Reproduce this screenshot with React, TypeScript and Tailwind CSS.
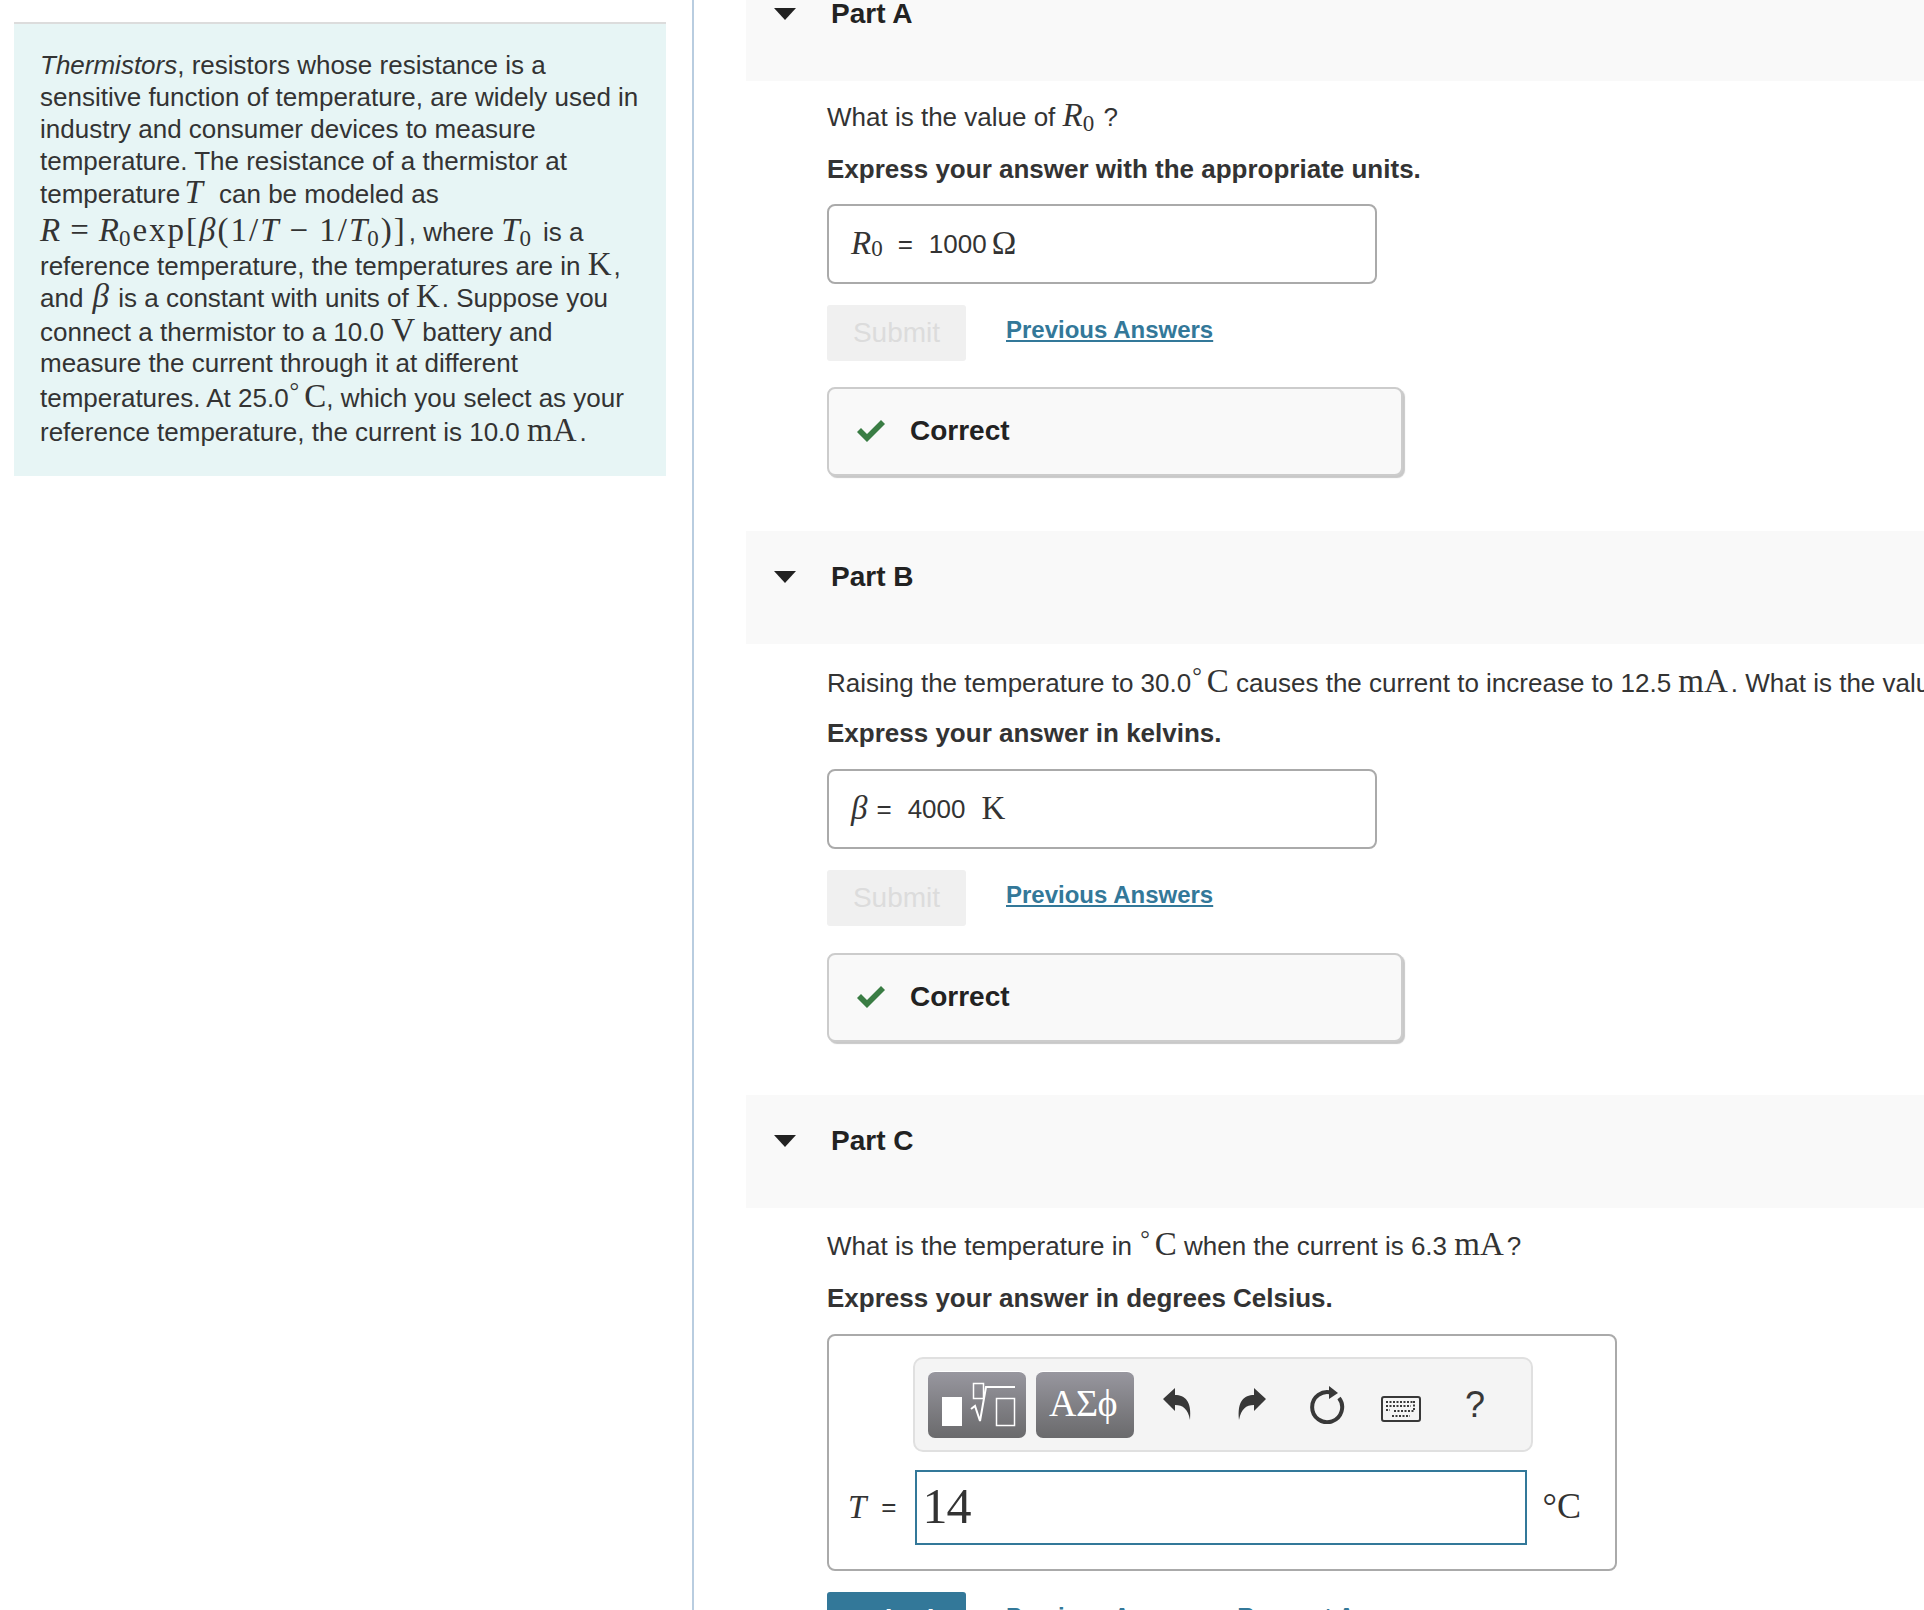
import React from 'react';

const SANS = "font-['Liberation_Sans',Arial,sans-serif]";

// Math bits, the original page renders these with MathJax
const Mi: React.FC<{ children: React.ReactNode; className?: string }> = ({ children, className = '' }) => (
  <span className={`font-['Liberation_Serif',serif] italic text-[33px] ${className}`}>{children}</span>
);

const Mn: React.FC<{ children: React.ReactNode; className?: string }> = ({ children, className = '' }) => (
  <span className={`font-['Liberation_Serif',serif] text-[33px] ${className}`}>{children}</span>
);

const Sub0: React.FC = () => (
  <span className="font-['Liberation_Serif',serif] text-[23px] relative top-[5px] -ml-[2px]">0</span>
);

const Deg: React.FC = () => (
  <span className="font-['Liberation_Serif',serif] text-[24px] relative -top-[8px] pl-[1px] pr-[5px]">°</span>
);

const PartHeader: React.FC<{ label: string }> = ({ label }) => (
  <div className="h-[113px] bg-[#f9f9f9] flex items-start">
    <svg width="22" height="12" viewBox="0 0 22 12" className="ml-[28px] mt-[40px] shrink-0">
      <path d="M0 0H22L11 12Z" fill="#222" />
    </svg>
    <div className="ml-[35px] mt-[29px] text-[28px] leading-[34px] font-bold text-[#222]">{label}</div>
  </div>
);

const AnswerBox: React.FC<{ children: React.ReactNode }> = ({ children }) => (
  <div className="w-[550px] h-[80px] border-2 border-[#aaa] rounded-[8px] flex items-center pl-[22px] bg-white">
    {children}
  </div>
);

const SubmitRow: React.FC<{ active?: boolean; links?: boolean }> = ({ active, links }) => (
  <div className="flex items-start">
    <div
      className={`w-[139px] h-[56px] rounded-[3px] flex items-center justify-center text-[28px] ${
        active ? 'bg-[#337899] text-white font-bold' : 'bg-[#f0f0f0] text-[#dcdcdc]'
      }`}
    >
      Submit
    </div>
    <a className="ml-[40px] mt-[9px] text-[24px] leading-[32px] font-bold text-[#337899] underline">Previous Answers</a>
    {links && (
      <a className="ml-[24px] mt-[9px] text-[24px] leading-[32px] font-bold text-[#337899] underline">Request Answer</a>
    )}
  </div>
);

const CorrectBox: React.FC = () => (
  <div className="w-[576px] h-[89px] border-2 border-[#ccc] rounded-[8px] bg-[#f9f9f9] shadow-[2px_2px_1px_#c8c8c8] flex items-center pl-[27px]">
    <svg width="30" height="24" viewBox="0 0 30 24" className="shrink-0 -mt-[2px]">
      <path d="M1 13L5 9L11 15L25 1L29 5L11 23Z" fill="#3a7d44" />
    </svg>
    <span className="ml-[24px] -mt-[1px] text-[28px] font-bold text-[#222]">Correct</span>
  </div>
);

const Toolbar: React.FC = () => (
  <div className="w-[620px] h-[95px] ml-[84px] border-2 border-[#e0e0e0] rounded-[10px] bg-[#f4f4f4] flex items-center pl-[13px]">
    <div className="w-[98px] h-[67px] rounded-[7px] bg-gradient-to-b from-[#98979f] to-[#6a6a6c] border-t border-white shrink-0">
      <svg width="98" height="67" viewBox="0 0 98 67">
        <rect x="14" y="25" width="20" height="29" fill="#fff" />
        <rect x="45.5" y="11.5" width="10" height="15" fill="none" stroke="#fff" strokeWidth="1.5" />
        <path d="M43 37L47 34L52 49L58 15H87" fill="none" stroke="#fff" strokeWidth="2" />
        <rect x="68.5" y="26.5" width="18" height="27" fill="none" stroke="#fff" strokeWidth="1.5" />
      </svg>
    </div>
    <div className="ml-[10px] w-[98px] h-[67px] rounded-[7px] bg-gradient-to-b from-[#98979f] to-[#6a6a6c] border-t border-white shrink-0 flex items-center justify-center pr-[4px] pb-[4px] font-['Liberation_Serif',serif] text-[38px] text-white -tracking-[0.5px]">
      ΑΣϕ
    </div>
    <svg width="32" height="36" viewBox="0 0 32 36" className="ml-[27px] shrink-0">
      <path d="M2 12L14 1V8C24 8 31 14 29 33C27 22 22 18 14 18V24Z" fill="#383838" />
    </svg>
    <svg width="32" height="36" viewBox="0 0 32 36" className="ml-[43px] shrink-0">
      <path d="M30 12L18 1V8C8 8 1 14 3 33C5 22 10 18 18 18V24Z" fill="#383838" />
    </svg>
    <svg width="36" height="38" viewBox="0 0 36 38" className="ml-[42px] shrink-0">
      <path d="M22 7A15 15 0 1 0 29 12" fill="none" stroke="#383838" strokeWidth="4" />
      <path d="M19 0L28 7L19 13Z" fill="#383838" />
    </svg>
    <svg width="40" height="26" viewBox="0 0 40 26" className="ml-[35px] mt-[8px] shrink-0">
      <rect x="1" y="1" width="38" height="24" rx="2" fill="none" stroke="#383838" strokeWidth="2" />
      <path d="M5 6H32M5 10H30M5 14H9M33 5V15H12M11 20H29" fill="none" stroke="#383838" strokeWidth="2" strokeDasharray="2 1.5" />
    </svg>
    <span className="ml-[44px] text-[36px] text-[#383838] font-['Liberation_Sans',sans-serif]">?</span>
  </div>
);

const App: React.FC = () => {
  return (
    <div className={`${SANS} w-[1924px] h-[1610px] overflow-hidden bg-white flex text-[26px] text-[#333]`}>
      {/* Left column: problem statement */}
      <div className="w-[694px] shrink-0 border-r-2 border-[#b9cde0] pl-[14px] pt-[22px]">
        <div className="w-[652px] h-[454px] bg-[#e7f5f5] border-t-2 border-[#dcdcdc] pl-[26px] pt-[25px] whitespace-nowrap">
          <div className="leading-[32px]"><i>Thermistors</i>, resistors whose resistance is a</div>
          <div className="leading-[32px]">sensitive function of temperature, are widely used in</div>
          <div className="leading-[32px]">industry and consumer devices to measure</div>
          <div className="h-[32px] leading-[32px]">temperature. The resistance of a thermistor at</div>
          <div className="h-[31px] leading-[31px]">temperature <Mi className="-ml-[3px] mr-[7px] tracking-[2px]">T</Mi> can be modeled as</div>
          <div className="mt-[4px] h-[37px] leading-[37px]">
            <span className="tracking-[2px]">
              <Mi>R</Mi><Mn className="mx-[8px]">=</Mn><Mi>R</Mi><Sub0 /><Mn>exp[</Mn><Mi>β</Mi><Mn>(1/</Mn><Mi>T</Mi><Mn className="mx-[9px]">−</Mn><Mn>1/</Mn><Mi>T</Mi><Sub0 /><Mn className="mr-[2px]">)]</Mn>
            </span>
            , where <Mi className="tracking-[2px]">T</Mi><Sub0 /><span className="ml-[12px]">is a</span>
          </div>
          <div className="h-[31px] leading-[31px]">reference temperature, the temperatures are in <Mn className="tracking-[2px]">K</Mn>,</div>
          <div className="h-[33px] leading-[33px]">and <Mi className="mx-[2px]">β</Mi> is a constant with units of <Mn className="tracking-[2px]">K</Mn>. Suppose you</div>
          <div className="h-[35px] leading-[35px]">connect a thermistor to a 10.0 <Mn>V</Mn> battery and</div>
          <div className="h-[31px] leading-[31px]">measure the current through it at different</div>
          <div className="h-[35px] leading-[35px]">temperatures. At 25.0<Deg /><Mn>C</Mn>, which you select as your</div>
          <div className="h-[32px] leading-[32px]">reference temperature, the current is 10.0 <Mn className="mr-[3px]">mA</Mn>.</div>
        </div>
      </div>

      {/* Right column: parts */}
      <div className="flex-1 min-w-0 pl-[52px] -mt-[32px] whitespace-nowrap">
        <PartHeader label="Part A" />
        <div className="pl-[81px]">
          <div className="mt-[16px] h-[36px] leading-[36px]">What is the value of <Mi className="tracking-[2px]">R</Mi><Sub0 /><span className="ml-[2px]"> ?</span></div>
          <div className="mt-[18px] h-[36px] leading-[36px] font-bold">Express your answer with the appropriate units.</div>
          <div className="mt-[17px]">
            <AnswerBox>
              <Mi className="tracking-[2px]">R</Mi><Sub0 /><span className="ml-[15px] mr-[16px] text-[26px]">=</span><span>1000</span><Mn className="ml-[5px]">Ω</Mn>
            </AnswerBox>
          </div>
          <div className="mt-[21px]"><SubmitRow /></div>
          <div className="mt-[26px]"><CorrectBox /></div>
        </div>

        <div className="mt-[55px]"><PartHeader label="Part B" /></div>
        <div className="pl-[81px]">
          <div className="mt-[19px] h-[36px] leading-[36px]">
            Raising the temperature to 30.0<Deg /><Mn>C</Mn> causes the current to increase to 12.5 <Mn className="mr-[3px]">mA</Mn>. What is the value of <Mi>β</Mi> ?
          </div>
          <div className="mt-[16px] h-[36px] leading-[36px] font-bold">Express your answer in kelvins.</div>
          <div className="mt-[18px]">
            <AnswerBox>
              <Mi className="tracking-[2px]">β</Mi><span className="ml-[7px] mr-[16px] text-[26px]">=</span><span>4000</span><Mn className="ml-[16px] tracking-[2px]">K</Mn>
            </AnswerBox>
          </div>
          <div className="mt-[21px]"><SubmitRow /></div>
          <div className="mt-[27px]"><CorrectBox /></div>
        </div>

        <div className="mt-[53px]"><PartHeader label="Part C" /></div>
        <div className="pl-[81px]">
          <div className="mt-[18px] h-[36px] leading-[36px]">
            What is the temperature in <Deg /><Mn>C</Mn> when the current is 6.3 <Mn className="mr-[3px]">mA</Mn>?
          </div>
          <div className="mt-[18px] h-[36px] leading-[36px] font-bold">Express your answer in degrees Celsius.</div>
          <div className="mt-[18px] w-[790px] h-[237px] border-2 border-[#aaa] rounded-[8px] pt-[21px]">
            <Toolbar />
            <div className="mt-[18px] flex items-center">
              <Mi className="ml-[19px] tracking-[2px]">T</Mi>
              <span className="ml-[13px] text-[26px]">=</span>
              <div className="ml-[18px] w-[612px] h-[75px] border-2 border-[#337899] flex items-center pl-[6px] pb-[3px] font-['Liberation_Serif',serif] text-[50px] -tracking-[1px] text-[#333]">
                14
              </div>
              <span className="ml-[16px] -mt-[4px] font-['Liberation_Serif',serif] text-[36px]">°C</span>
            </div>
          </div>
          <div className="mt-[21px]"><SubmitRow active links /></div>
        </div>
      </div>
    </div>
  );
};

export default App;
